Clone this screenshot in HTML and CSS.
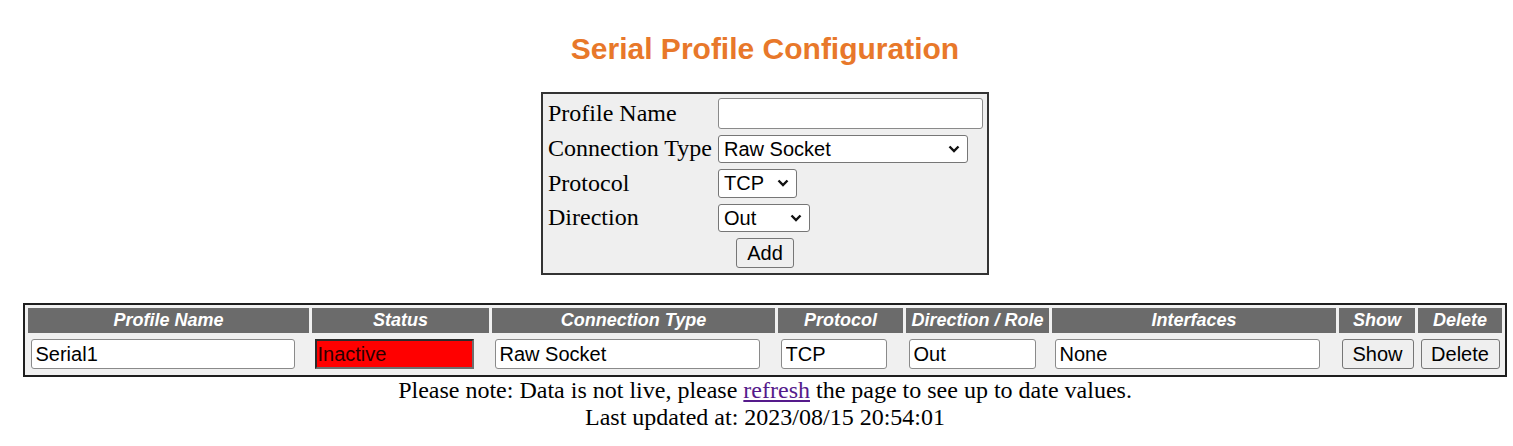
FILE: index.html
```html
<!DOCTYPE html>
<html lang="en">
<head>
<meta charset="utf-8">
<title>Serial Profile Configuration</title>
<link rel="stylesheet" href="styles.css">
</head>
<body>
<main class="page">
  <h1 class="title">Serial Profile Configuration</h1>

  <form class="profile-form">
    <label class="lbl" for="pname">Profile Name</label>
    <div class="ctl"><input id="pname" class="txt txt-name" type="text"></div>

    <label class="lbl" for="ctype">Connection Type</label>
    <div class="ctl">
      <span class="sel">
        <select id="ctype" class="select sel-conn"><option>Raw Socket</option></select>
        <svg class="chev" viewBox="0 0 12 8" width="12" height="8"><path d="M1.5 1.5 L6 6 L10.5 1.5" fill="none" stroke="#111" stroke-width="2.4"/></svg>
      </span>
    </div>

    <label class="lbl" for="proto">Protocol</label>
    <div class="ctl">
      <span class="sel">
        <select id="proto" class="select sel-proto"><option>TCP</option></select>
        <svg class="chev" viewBox="0 0 12 8" width="12" height="8"><path d="M1.5 1.5 L6 6 L10.5 1.5" fill="none" stroke="#111" stroke-width="2.4"/></svg>
      </span>
    </div>

    <label class="lbl" for="dir">Direction</label>
    <div class="ctl">
      <span class="sel">
        <select id="dir" class="select sel-dir"><option>Out</option></select>
        <svg class="chev" viewBox="0 0 12 8" width="12" height="8"><path d="M1.5 1.5 L6 6 L10.5 1.5" fill="none" stroke="#111" stroke-width="2.4"/></svg>
      </span>
    </div>

    <div class="actions"><button type="button" class="btn btn-add">Add</button></div>
  </form>

  <table class="profiles">
    <colgroup>
      <col class="c-name"><col class="c-status"><col class="c-conn"><col class="c-proto">
      <col class="c-dir"><col class="c-intf"><col class="c-show"><col class="c-del">
    </colgroup>
    <thead>
      <tr>
        <th>Profile Name</th>
        <th>Status</th>
        <th>Connection Type</th>
        <th>Protocol</th>
        <th>Direction / Role</th>
        <th>Interfaces</th>
        <th>Show</th>
        <th>Delete</th>
      </tr>
    </thead>
    <tbody>
      <tr>
        <td><input class="txt cell-name" type="text" value="Serial1" readonly></td>
        <td><input class="txt cell-status" type="text" value="Inactive" readonly></td>
        <td><input class="txt cell-conn" type="text" value="Raw Socket" readonly></td>
        <td><input class="txt cell-proto" type="text" value="TCP" readonly></td>
        <td><input class="txt cell-dir" type="text" value="Out" readonly></td>
        <td><input class="txt cell-intf" type="text" value="None" readonly></td>
        <td><button type="button" class="btn btn-show">Show</button></td>
        <td><button type="button" class="btn btn-del">Delete</button></td>
      </tr>
    </tbody>
  </table>

  <p class="note">Please note: Data is not live, please <a href="#">refresh</a> the page to see up to date values.<br>Last updated at: 2023/08/15 20:54:01</p>
</main>
</body>
</html>
```

FILE: styles.css
```css
html, body {
  margin: 0;
  background: #ffffff;
}

body {
  font-family: "Liberation Serif", "Times New Roman", serif;
  font-size: 24px;
  color: #000;
}

.page {
  display: flex;
  flex-direction: column;
  align-items: center;
  padding: 0 6px 0 23px;
}

.title {
  font-family: "Liberation Sans", Arial, sans-serif;
  font-weight: bold;
  font-size: 30px;
  line-height: 34.5px;
  color: #e8782a;
  margin: 32px 0 25px;
}

/* ---------- add form ---------- */
.profile-form {
  display: grid;
  grid-template-columns: 170px 268px;
  row-gap: 3px;
  padding: 2.5px 3px 3px;
  border: 2px solid #333;
  background: #efefef;
  margin: 0;
}

.lbl {
  display: flex;
  align-items: center;
  padding: 1.5px 0 1.5px 2px;
  white-space: nowrap;
  line-height: 27px;
}

.ctl {
  display: flex;
  align-items: center;
  padding: 1.5px 0 1.5px 2px;
}

.actions {
  grid-column: 1 / -1;
  display: flex;
  justify-content: center;
  padding: 1.5px 0;
}

.txt {
  box-sizing: border-box;
  height: 31px;
  margin: 0;
  padding: 0 4px;
  border: 1.5px solid #8a8a8a;
  border-radius: 3px;
  background: #fff;
  color: #000;
  font-family: "Liberation Sans", Arial, sans-serif;
  font-size: 20px;
  outline: none;
}

.txt-name { width: 265px; }

.sel {
  position: relative;
  display: inline-flex;
}

.select {
  -webkit-appearance: none;
  appearance: none;
  box-sizing: border-box;
  height: 28.5px;
  margin: 0;
  padding: 0 24px 0 5px;
  border: 1.5px solid #767676;
  border-radius: 3px;
  background: #fff;
  color: #000;
  font-family: "Liberation Sans", Arial, sans-serif;
  font-size: 20px;
}

.sel-conn { width: 250px; }
.sel-proto { width: 79px; }
.sel-dir { width: 92px; }

.chev {
  position: absolute;
  right: 8px;
  top: 10px;
  pointer-events: none;
}

.btn {
  box-sizing: border-box;
  height: 30px;
  margin: 0;
  padding: 0;
  border: 1.5px solid #767676;
  border-radius: 3px;
  background: #efefef;
  color: #000;
  font-family: "Liberation Sans", Arial, sans-serif;
  font-size: 20px;
}

.btn-add { width: 58px; }
.btn-show { width: 72px; }
.btn-del { width: 79px; }

/* ---------- profiles table ---------- */
.profiles {
  width: 100%;
  table-layout: fixed;
  border-collapse: separate;
  border-spacing: 3px;
  border: 2px solid #1e1e1e;
  background: #f0f0f0;
  margin-top: 28px;
}

.c-name { width: 281px; }
.c-status { width: 177px; }
.c-conn { width: 283px; }
.c-proto { width: 125px; }
.c-dir { width: 143px; }
.c-intf { width: 284px; }
.c-show { width: 76px; }
.c-del { width: 84px; }

.profiles th {
  height: 25.5px;
  padding: 0;
  background: #6b6b6b;
  color: #fff;
  font-family: "Liberation Sans", Arial, sans-serif;
  font-size: 18px;
  font-weight: bold;
  font-style: italic;
  text-align: center;
  white-space: nowrap;
}

.profiles td {
  padding: 3px 0 3px 2.5px;
  text-align: left;
  vertical-align: middle;
}

.profiles .txt { height: 30px; }

.cell-name { width: 264px; }
.cell-status {
  width: 159px;
  padding: 0 1px;
  border-width: 2.5px;
  border-style: solid;
  border-color: #2b2b2b #6e6e6e #6e6e6e #2b2b2b;
  border-radius: 0;
  background: #ff0000;
  color: #2a0000;
}
.cell-conn { width: 265px; }
.cell-proto { width: 106px; }
.cell-dir { width: 127px; }
.cell-intf { width: 265px; }

/* ---------- note ---------- */
.note {
  margin: 0;
  text-align: center;
}

.note a {
  color: #551a8b;
  text-decoration: underline;
}
```
